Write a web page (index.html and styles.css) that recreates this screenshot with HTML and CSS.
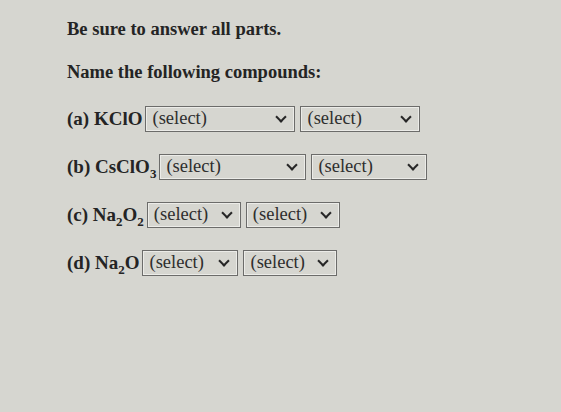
FILE: index.html
```html
<!DOCTYPE html>
<html lang="en">
<head>
    <meta charset="UTF-8">
    <title>Name the following compounds</title>
    <link rel="stylesheet" href="styles.css">
</head>
<body>
    <main class="question">
        <p class="intro">Be sure to answer all parts.</p>
        <p class="intro">Name the following compounds:</p>

        <div class="row">
            <span class="label">(a) KClO</span>
            <div class="picker w-a1"><span>(select)</span><i class="chev"></i></div>
            <div class="picker w-a2"><span>(select)</span><i class="chev"></i></div>
        </div>

        <div class="row">
            <span class="label">(b) CsClO<sub>3</sub></span>
            <div class="picker w-b1"><span>(select)</span><i class="chev"></i></div>
            <div class="picker w-b2"><span>(select)</span><i class="chev"></i></div>
        </div>

        <div class="row">
            <span class="label">(c) Na<sub>2</sub>O<sub>2</sub></span>
            <div class="picker"><span>(select)</span><i class="chev"></i></div>
            <div class="picker"><span>(select)</span><i class="chev"></i></div>
        </div>

        <div class="row">
            <span class="label">(d) Na<sub>2</sub>O</span>
            <div class="picker w-d1"><span>(select)</span><i class="chev"></i></div>
            <div class="picker"><span>(select)</span><i class="chev"></i></div>
        </div>
    </main>
</body>
</html>
```

FILE: styles.css
```css
/* page */
body {
    margin: 0;
    background-color: #d6d6d0;
    color: #242424;
    font-family: 'Liberation Serif', 'Times New Roman', serif;
    height: 412px;
    overflow: hidden;
}

.question {
    padding: 18px 0 0 67px;
}

.intro {
    font-weight: bold;
    font-size: 18.5px;
    line-height: 22px;
    margin: 0 0 21px 0;
}

.intro + .intro {
    margin-bottom: 22px;
}

.row {
    display: flex;
    align-items: center;
    gap: 5px;
    height: 27px;
    margin-bottom: 21px;
}

.label {
    font-weight: bold;
    font-size: 19px;
    margin-right: -2px;
}

.label sub {
    font-size: 13px;
    line-height: 0;
}

/* select boxes */
.picker {
    box-sizing: border-box;
    width: 94px;
    height: 26px;
    border: 1px solid #6c6c6a;
    box-shadow: inset 0 0 0 1px #ecece8;
    display: flex;
    align-items: center;
    justify-content: space-between;
    padding: 0 9px 0 6px;
    font-size: 18.5px;
    color: #2e2e2e;
}

.w-a1 { width: 150px; }
.w-a2 { width: 120px; }
.w-b1 { width: 147px; }
.w-b2 { width: 116px; }
.w-d1 { width: 96px; }

.chev {
    width: 6px;
    height: 6px;
    border-right: 2px solid #262626;
    border-bottom: 2px solid #262626;
    transform: rotate(45deg);
    margin-top: -4px;
}
```
